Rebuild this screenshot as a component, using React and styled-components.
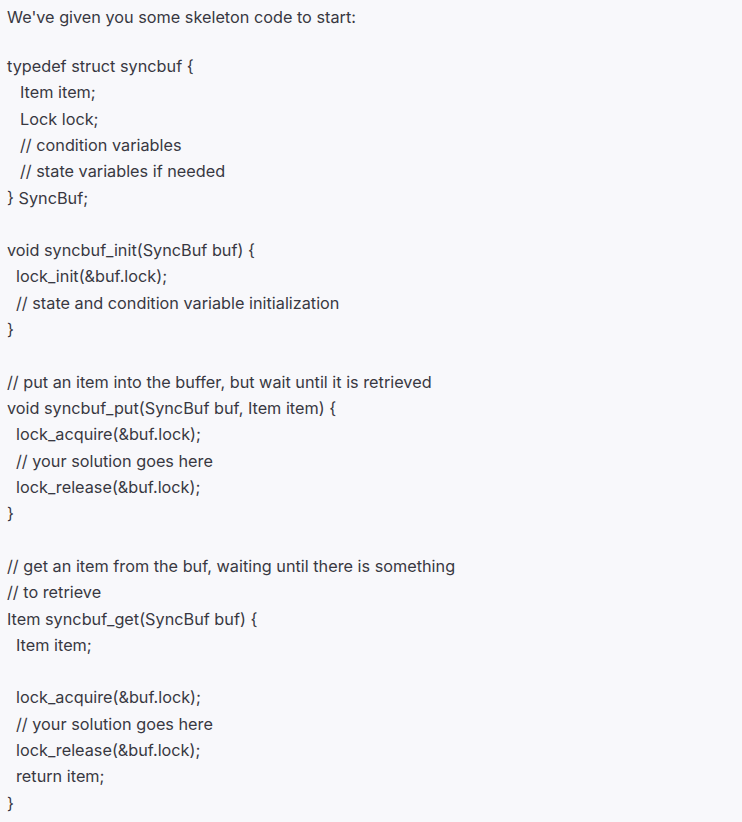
import React from "react";
import styled, { createGlobalStyle } from "styled-components";

const GlobalStyle = createGlobalStyle`
  html, body {
    margin: 0;
    padding: 0;
    background: #f8f8fb;
  }
`;

const code = [
  { text: "typedef struct syncbuf {" },
  { text: "Item item;", indent: 13 },
  { text: "Lock lock;", indent: 13 },
  { text: "// condition variables", indent: 13 },
  { text: "// state variables if needed", indent: 13 },
  { text: "} SyncBuf;" },
  { text: "" },
  { text: "void syncbuf_init(SyncBuf buf) {" },
  { text: "lock_init(&buf.lock);", indent: 9 },
  { text: "// state and condition variable initialization", indent: 9 },
  { text: "}" },
  { text: "" },
  { text: "// put an item into the buffer, but wait until it is retrieved" },
  { text: "void syncbuf_put(SyncBuf buf, Item item) {" },
  { text: "lock_acquire(&buf.lock);", indent: 9 },
  { text: "// your solution goes here", indent: 9 },
  { text: "lock_release(&buf.lock);", indent: 9 },
  { text: "}" },
  { text: "" },
  { text: "// get an item from the buf, waiting until there is something" },
  { text: "// to retrieve" },
  { text: "Item syncbuf_get(SyncBuf buf) {" },
  { text: "Item item;", indent: 9 },
  { text: "" },
  { text: "lock_acquire(&buf.lock);", indent: 9 },
  { text: "// your solution goes here", indent: 9 },
  { text: "lock_release(&buf.lock);", indent: 9 },
  { text: "return item;", indent: 9 },
  { text: "}" },
];

const App = () => {
  return (
    <>
      <GlobalStyle />
      <Page>
        <Intro>We've given you some skeleton code to start:</Intro>
        <Code>
          {code.map((line, i) => (
            <Line key={i} $indent={line.indent || 0}>
              {line.text || "\u00a0"}
            </Line>
          ))}
        </Code>
      </Page>
    </>
  );
};

export default App;

const Page = styled.div`
  width: 742px;
  min-height: 822px;
  box-sizing: border-box;
  padding: 4px 0 0 7px;
  background: #f8f8fb;
  color: #383842;
  font-family: Inter, "Open Sans", sans-serif;
  font-size: 16.25px;
`;

const Intro = styled.p`
  margin: 0 0 22.7px;
  line-height: 26.3px;
`;

const Code = styled.div`
  display: flex;
  flex-direction: column;
`;

const Line = styled.div`
  height: 26.32px;
  line-height: 26.32px;
  padding-left: ${(p) => p.$indent}px;
  white-space: pre;
`;
